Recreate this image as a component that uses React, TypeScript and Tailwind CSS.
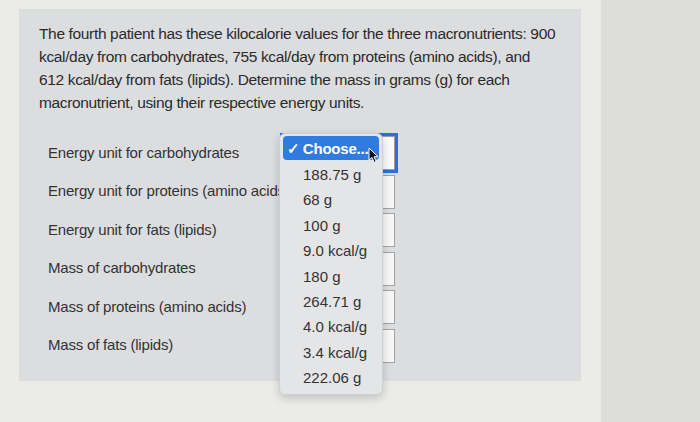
const rows = [
  "Energy unit for carbohydrates",
  "Energy unit for proteins (amino acids)",
  "Energy unit for fats (lipids)",
  "Mass of carbohydrates",
  "Mass of proteins (amino acids)",
  "Mass of fats (lipids)",
];

const options = [
  "188.75 g",
  "68 g",
  "100 g",
  "9.0 kcal/g",
  "180 g",
  "264.71 g",
  "4.0 kcal/g",
  "3.4 kcal/g",
  "222.06 g",
];

function Cursor() {
  return (
    <svg width="12" height="17" viewBox="0 0 12 17" className="absolute left-[349px] top-[138px]">
      <path
        d="M1 1 L1 13 L4 10.5 L6.2 15.5 L8.2 14.6 L6 9.8 L10 9.8 Z"
        fill="#111"
        stroke="#fff"
        strokeWidth="1"
        strokeLinejoin="round"
      />
    </svg>
  );
}

export default function App() {
  return (
    <div className="w-[700px] h-[422px] flex font-['Liberation_Sans',Arial,sans-serif] text-[#2b2b2b] overflow-hidden">
      <div className="w-[601px] h-full bg-[#ebece8] pt-[9px] pl-[19px]">
        <div className="relative w-[562px] h-[372px] bg-[#dcdddf] px-[20px] pt-[13px]">
          <p className="text-[15.5px] leading-[23px] tracking-[-0.35px]">
            The fourth patient has these kilocalorie values for the three macronutrients: 900
            <br />
            kcal/day from carbohydrates, 755 kcal/day from proteins (amino acids), and
            <br />
            612 kcal/day from fats (lipids). Determine the mass in grams (g) for each
            <br />
            macronutrient, using their respective energy units.
          </p>

          <div className="mt-[22px] flex flex-col gap-[4.5px] text-[15px] text-[#333]">
            {rows.map((label, i) => (
              <div key={i} className="flex items-center h-[34px]">
                <span className="w-[244px] pl-[9px] whitespace-nowrap tracking-[-0.2px]">{label}</span>
                <div
                  className={
                    i === 0
                      ? "w-[112px] h-[34px] bg-[#fafafa] border border-[#9a9a9a] outline-[3px] outline-solid outline-[#2c6fd8]"
                      : "w-[112px] h-[34px] bg-[#f6f6f6] border border-[#a3a3a3]"
                  }
                />
              </div>
            ))}
          </div>

          <div className="absolute left-[260px] top-[124px] w-[104px] rounded-[6px] bg-[#e4e5e6] border border-[#cfd0d1] shadow-[0_3px_8px_rgba(0,0,0,0.18)] px-[3px] pt-[2px] pb-[3px] text-[15px] text-[#333]">
            <div className="h-[24px] rounded-[4px] bg-[#2f7be0] text-white font-bold flex items-center pl-[4px] leading-none tracking-[-0.2px]">
              <span className="mr-[3px]">✓</span>Choose...
            </div>
            <div className="mt-[2px]">
              {options.map((o) => (
                <div key={o} className="h-[25.4px] leading-[25.4px] pl-[20px]">
                  {o}
                </div>
              ))}
            </div>
          </div>
          <Cursor />
        </div>
      </div>
      <div className="flex-1 h-full bg-[#dddedc]" />
    </div>
  );
}
